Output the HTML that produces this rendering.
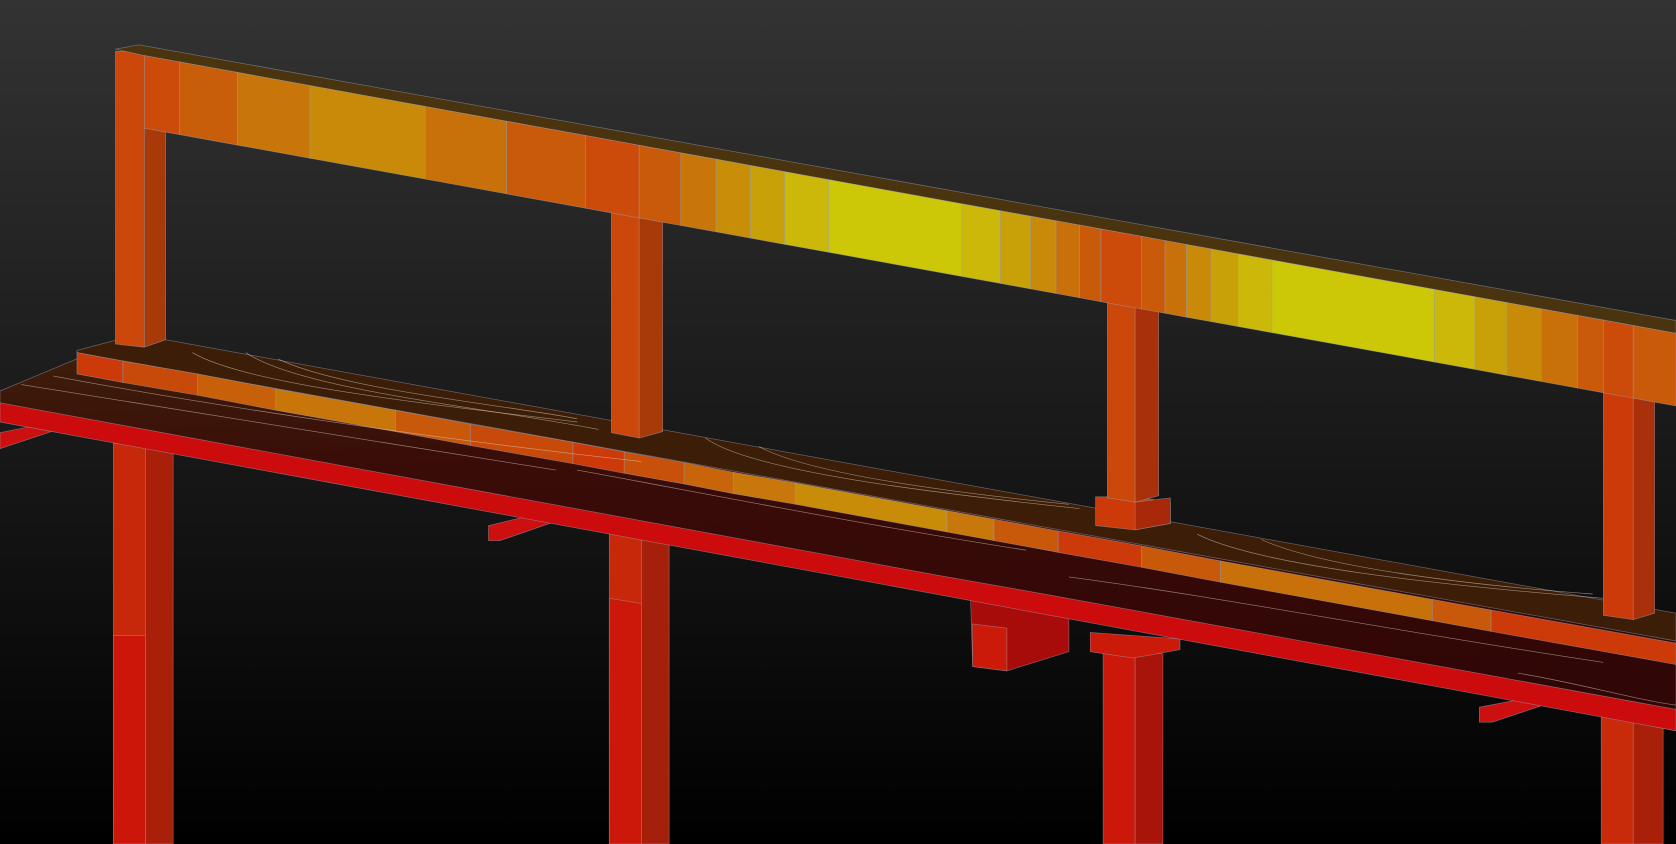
<!DOCTYPE html>
<html><head><meta charset="utf-8"><style>
html,body{margin:0;padding:0;background:#000;overflow:hidden}
svg{display:block}
</style></head><body>
<svg width="1676" height="844" viewBox="0 0 1568 790" preserveAspectRatio="none" xmlns="http://www.w3.org/2000/svg">
<defs>
<linearGradient id="bg" x1="0" y1="0" x2="0" y2="1">
<stop offset="0" stop-color="#333"/><stop offset="1" stop-color="#000"/></linearGradient>
<linearGradient id="deck" x1="0" y1="0" x2="0.15" y2="1">
<stop offset="0" stop-color="#3e200a"/><stop offset="0.35" stop-color="#3a0c08"/><stop offset="1" stop-color="#300606"/></linearGradient>
</defs>
<rect width="1568" height="790" fill="url(#bg)"/>
<g stroke="#9aa0b0" stroke-width="0.6" stroke-opacity="0.6">
<polygon points="106,415 136,415 136,790 106,790" fill="#c8280a"/>
<polygon points="106,595 136,595 136,790 106,790" fill="#cc160a"/>
<polygon points="136,415 162,420 162,790 136,790" fill="#a8200a"/>
<polygon points="570,500 600,500 600,790 570,790" fill="#c8280a"/>
<polygon points="570,560 600,565 600,790 570,790" fill="#cc180a"/>
<polygon points="600,500 626,505 626,790 600,790" fill="#a4200a"/>
<polygon points="1032,610 1062,610 1062,790 1032,790" fill="#cc180a"/>
<polygon points="1062,610 1088,612 1088,790 1062,790" fill="#a8140a"/>
<polygon points="1498,670 1528,670 1528,790 1498,790" fill="#c82a0a"/>
<polygon points="1528,670 1556,675 1556,790 1528,790" fill="#a8200a"/>
<polygon points="0,405 35,398 60,400 0,420" fill="#cc1010"/>
<polygon points="457,492 490,484 520,488 468,506 457,506" fill="#cc1010"/>
<polygon points="1384,662 1420,655 1450,658 1396,676 1384,676" fill="#cc1010"/>
<polygon points="908,560 1000,578 1000,610 942,628 910,624" fill="#a80c0a"/>
<polygon points="910,584 942,588 942,628 910,624" fill="#cc1a0a"/>
<polygon points="1020,592 1104,598 1104,608 1060,616 1020,610" fill="#cc1a0a"/>
<polygon points="0,366 110,320 1568,575 1568,684 0,378" fill="url(#deck)"/>
<polygon points="0,377 875,538 977,556 1568,664 1568,684 977,575 875,556 0,395" fill="#cc0c0c"/>
<polygon points="72,328 110,318 155,318 1568,574 1568,600 72,330" fill="#3c1e08"/>
<polygon points="72,330 115,338 115,358 72,350" fill="#cc3a0a"/>
<polygon points="115,338 185,350 185,370 115,358" fill="#c84a0a"/>
<polygon points="185,350 258,364 258,384 185,370" fill="#c8600a"/>
<polygon points="258,364 370,384 370,404 258,384" fill="#c8760a"/>
<polygon points="370,384 440,397 440,417 370,404" fill="#c8580a"/>
<polygon points="440,397 536,414 536,434 440,417" fill="#c84a0a"/>
<polygon points="536,414 584,423 584,443 536,434" fill="#cc3a0a"/>
<polygon points="584,423 640,433 640,453 584,443" fill="#c8500a"/>
<polygon points="640,433 686,442 686,462 640,453" fill="#c8640a"/>
<polygon points="686,442 744,452 744,472 686,462" fill="#c8780a"/>
<polygon points="744,452 886,478 886,498 744,472" fill="#c88c08"/>
<polygon points="886,478 930,486 930,506 886,498" fill="#c8780a"/>
<polygon points="930,486 990,497 990,517 930,506" fill="#c8580a"/>
<polygon points="990,497 1068,511 1068,531 990,517" fill="#cc3a0a"/>
<polygon points="1068,511 1142,525 1142,545 1068,531" fill="#c8580a"/>
<polygon points="1142,525 1340,561 1340,581 1142,545" fill="#c8700a"/>
<polygon points="1340,561 1395,571 1395,591 1340,581" fill="#c8580a"/>
<polygon points="1395,571 1568,602 1568,622 1395,591" fill="#cc3a0a"/>
<polygon points="1025,465 1062,465 1095,470 1095,490 1062,496 1025,492" fill="#cc3a0a"/>
<polygon points="1062,470 1095,466 1095,490 1062,496" fill="#a8280a"/>
<polygon points="108,48 135,48 135,325 108,322" fill="#cc480a"/>
<polygon points="135,48 155,52 155,318 135,325" fill="#a83a0a"/>
<polygon points="572,135 598,140 598,410 572,405" fill="#cc480a"/>
<polygon points="598,140 620,144 620,404 598,410" fill="#a83a0a"/>
<polygon points="1036,215 1062,220 1062,470 1036,466" fill="#cc480a"/>
<polygon points="1062,220 1084,224 1084,464 1062,470" fill="#a8300a"/>
<polygon points="1500,300 1528,305 1528,580 1500,576" fill="#cc3a0a"/>
<polygon points="1528,305 1548,308 1548,574 1528,580" fill="#a8300a"/>
<polygon points="108,46 130,42 1568,300 1568,312 135,52" fill="#4a3410"/>
<polygon points="135,52 168,58 168,126 135,120" fill="#cc4a0a"/>
<polygon points="168,58 222,67.8 222,135.8 168,126" fill="#c85e0a"/>
<polygon points="222,67.8 290,80.1 290,148.1 222,135.8" fill="#c8760a"/>
<polygon points="290,80.1 398,99.7 398,167.7 290,148.1" fill="#c88a08"/>
<polygon points="398,99.7 474,113.5 474,181.5 398,167.7" fill="#c8700a"/>
<polygon points="474,113.5 548,126.9 548,194.9 474,181.5" fill="#c85a0a"/>
<polygon points="548,126.9 598,136 598,204 548,194.9" fill="#cc4a0a"/>
<polygon points="598,136 637,143.1 637,211.1 598,204" fill="#c85a0a"/>
<polygon points="637,143.1 670,149 670,217 637,211.1" fill="#c8760a"/>
<polygon points="670,149 702,154.9 702,222.9 670,217" fill="#c88e08"/>
<polygon points="702,154.9 734,160.7 734,228.7 702,222.9" fill="#c8a008"/>
<polygon points="734,160.7 775,168.1 775,236.1 734,228.7" fill="#ccb808"/>
<polygon points="775,168.1 900,190.8 900,258.8 775,236.1" fill="#ccc808"/>
<polygon points="900,190.8 936,197.3 936,265.3 900,258.8" fill="#ccb808"/>
<polygon points="936,197.3 964,202.4 964,270.4 936,265.3" fill="#c8a008"/>
<polygon points="964,202.4 988,206.7 988,274.7 964,270.4" fill="#c88a08"/>
<polygon points="988,206.7 1010,210.7 1010,278.7 988,274.7" fill="#c8700a"/>
<polygon points="1010,210.7 1030,214.4 1030,282.4 1010,278.7" fill="#c85a0a"/>
<polygon points="1030,214.4 1068,221.2 1068,289.2 1030,282.4" fill="#cc4a0a"/>
<polygon points="1068,221.2 1090,225.2 1090,293.2 1068,289.2" fill="#c85a0a"/>
<polygon points="1090,225.2 1110,228.9 1110,296.9 1090,293.2" fill="#c8700a"/>
<polygon points="1110,228.9 1133,233 1133,301 1110,296.9" fill="#c88a08"/>
<polygon points="1133,233 1158,237.6 1158,305.6 1133,301" fill="#c8a008"/>
<polygon points="1158,237.6 1190,243.4 1190,311.4 1158,305.6" fill="#ccb808"/>
<polygon points="1190,243.4 1342,270.9 1342,338.9 1190,311.4" fill="#ccc808"/>
<polygon points="1342,270.9 1380,277.8 1380,345.8 1342,338.9" fill="#ccb808"/>
<polygon points="1380,277.8 1410,283.3 1410,351.3 1380,345.8" fill="#c8a008"/>
<polygon points="1410,283.3 1442,289.1 1442,357.1 1410,351.3" fill="#c88a08"/>
<polygon points="1442,289.1 1476,295.3 1476,363.3 1442,357.1" fill="#c8700a"/>
<polygon points="1476,295.3 1500,299.6 1500,367.6 1476,363.3" fill="#c85a0a"/>
<polygon points="1500,299.6 1528,304.7 1528,372.7 1500,367.6" fill="#cc4a0a"/>
<polygon points="1528,304.7 1568,312 1568,380 1528,372.7" fill="#c85a0a"/>
</g>
<g fill="none" stroke="#e8e0d0" stroke-width="0.6" stroke-opacity="0.55">
<path d="M180,330 C230,360 400,378 540,395"/>
<path d="M230,330 C280,365 460,382 560,402"/>
<path d="M260,336 C320,365 480,380 540,392"/>
<path d="M20,360 C150,380 300,405 520,440"/>
<path d="M50,352 C200,380 400,410 600,432"/>
<path d="M660,410 C700,440 860,460 1010,476"/>
<path d="M710,418 C760,445 900,462 1000,472"/>
<path d="M540,440 C650,460 800,490 960,515"/>
<path d="M1120,500 C1180,530 1350,548 1500,560"/>
<path d="M1180,505 C1240,532 1380,548 1490,556"/>
<path d="M1000,540 C1150,560 1300,590 1500,620"/>
<path d="M1420,630 C1480,640 1530,655 1568,660"/>
</g>
</svg>
</body></html>
